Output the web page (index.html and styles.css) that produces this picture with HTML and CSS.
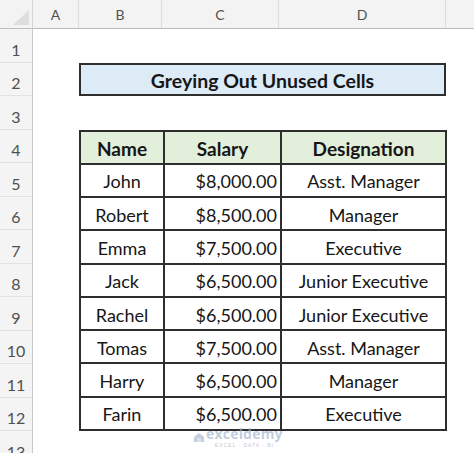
FILE: index.html
```html
<!DOCTYPE html>
<html>
<head>
<meta charset="utf-8">
<link rel="stylesheet" href="styles.css">
</head>
<body>
<div class="sheet">
  <div class="corner">
    <svg class="tri" width="16" height="15" viewBox="0 0 16 15"><polygon points="16,0 16,15 0,15" fill="#dedede"/></svg>
  </div>
  <div class="colhdr">
    <div class="ch">A</div>
    <div class="ch">B</div>
    <div class="ch">C</div>
    <div class="ch">D</div>
    <div class="ch last"></div>
  </div>
  <div class="rowhdr">
    <div class="rh">1</div>
    <div class="rh">2</div>
    <div class="rh">3</div>
    <div class="rh">4</div>
    <div class="rh">5</div>
    <div class="rh">6</div>
    <div class="rh">7</div>
    <div class="rh">8</div>
    <div class="rh">9</div>
    <div class="rh">10</div>
    <div class="rh">11</div>
    <div class="rh">12</div>
    <div class="rh">13</div>
  </div>
  <div class="cells">
    <div class="title">Greying Out Unused Cells</div>
    <div class="data">
      <div class="c hd">Name</div><div class="c hd">Salary</div><div class="c hd">Designation</div>
      <div class="c">John</div><div class="c num">$8,000.00</div><div class="c">Asst. Manager</div>
      <div class="c">Robert</div><div class="c num">$8,500.00</div><div class="c">Manager</div>
      <div class="c">Emma</div><div class="c num">$7,500.00</div><div class="c">Executive</div>
      <div class="c">Jack</div><div class="c num">$6,500.00</div><div class="c">Junior Executive</div>
      <div class="c">Rachel</div><div class="c num">$6,500.00</div><div class="c">Junior Executive</div>
      <div class="c">Tomas</div><div class="c num">$7,500.00</div><div class="c">Asst. Manager</div>
      <div class="c">Harry</div><div class="c num">$6,500.00</div><div class="c">Manager</div>
      <div class="c">Farin</div><div class="c num">$6,500.00</div><div class="c">Executive</div>
    </div>
    <div class="watermark">
      <svg class="wm-icon" width="12" height="11" viewBox="0 0 12 11"><path d="M1 5 L6 1 L11 5 L11 10 L1 10 Z" fill="#b9c6da"/><rect x="4" y="6" width="4" height="4" fill="#d6dde9"/></svg>
      <div class="wm-text">
        <span class="wm-name">exceldemy</span>
        <span class="wm-sub">EXCEL · DATA · BI</span>
      </div>
    </div>
  </div>
</div>
</body>
</html>
```

FILE: styles.css
```css
* { box-sizing: border-box; }
html, body { margin: 0; padding: 0; background: #ffffff; }
body { font-family: Lato, "Open Sans", "Liberation Sans", sans-serif; color: #161616; }

.sheet {
  width: 474px;
  height: 453px;
  overflow: hidden;
  display: grid;
  grid-template-columns: 33px 1fr;
  grid-template-rows: 29px 1fr;
}

.corner {
  background: #f3f3f3;
  border-right: 1px solid #d4d4d4;
  border-bottom: 1px solid #bdbdbd;
  display: flex;
  align-items: flex-end;
  justify-content: flex-end;
  padding: 0 3px 3px 0;
}

.colhdr {
  background: #f3f3f3;
  border-bottom: 1px solid #bdbdbd;
  display: grid;
  grid-template-columns: 46px 83px 117px 167px 1fr;
}
.ch {
  border-right: 1px solid #dcdcdc;
  display: flex;
  align-items: center;
  justify-content: center;
  font-size: 14px;
  color: #505050;
  padding-top: 1px;
}
.ch.last { border-right: none; }

.rowhdr {
  background: #f4f4f4;
  border-right: 1px solid #c9c9c9;
  display: grid;
  grid-template-rows: repeat(13, 33.5px);
}
.rh {
  border-bottom: 1px solid #e2e2e2;
  display: flex;
  align-items: center;
  justify-content: center;
  font-size: 16px;
  color: #505050;
  padding-top: 8px;
}

.cells {
  position: relative;
  display: grid;
  grid-template-columns: 46px 83px 117px 167px 1fr;
  grid-template-rows: repeat(13, 33.5px);
}

.title {
  grid-column: 2 / 5;
  grid-row: 2;
  background: #ddebf7;
  border: 2px solid #2e2e2e;
  display: flex;
  align-items: center;
  justify-content: center;
  font-weight: 700;
  font-size: 19.5px;
  padding-top: 2px;
}

.data {
  grid-column: 2 / 5;
  grid-row: 4 / 13;
  display: grid;
  grid-template-columns: 84px 117px 1fr;
  grid-template-rows: repeat(9, 1fr);
  border-top: 2px solid #2e2e2e;
  border-left: 2px solid #2e2e2e;
  margin-right: -1px;
}
.c {
  border-right: 2px solid #2e2e2e;
  border-bottom: 2px solid #2e2e2e;
  display: flex;
  align-items: center;
  justify-content: center;
  font-size: 18px;
  padding-top: 2px;
  white-space: nowrap;
}
.c.hd {
  background: #e2efda;
  font-weight: 700;
  font-size: 19px;
}
.c.num {
  justify-content: flex-end;
  padding-right: 3px;
}

.watermark {
  position: absolute;
  left: 160px;
  top: 398px;
  display: flex;
  align-items: center;
  gap: 1px;
  opacity: 0.85;
}
.wm-text {
  display: flex;
  flex-direction: column;
  align-items: center;
  line-height: 1;
}
.wm-name {
  font-family: "Open Sans", Lato, sans-serif;
  font-weight: 700;
  font-size: 14px;
  color: rgba(160, 178, 205, 0.75);
  letter-spacing: 0.2px;
}
.wm-sub {
  font-family: "Liberation Sans", sans-serif;
  font-size: 5px;
  color: rgba(160, 170, 185, 0.8);
  letter-spacing: 1px;
  margin-top: 2px;
}
```
